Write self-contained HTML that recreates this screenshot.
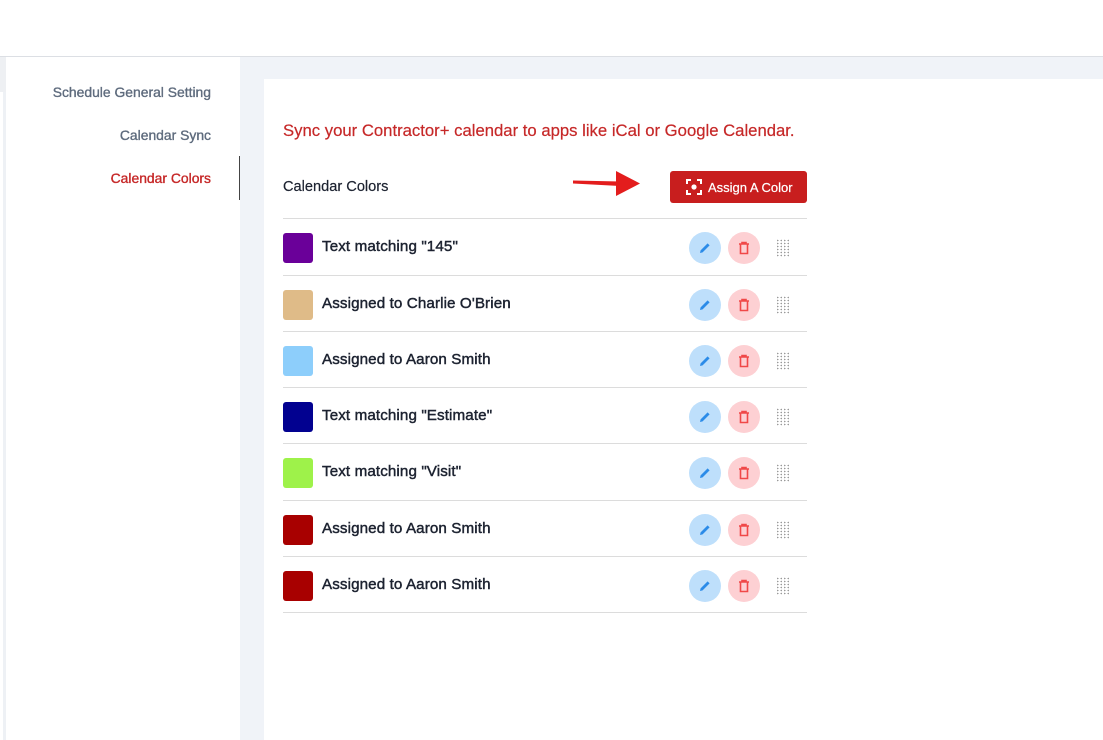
<!DOCTYPE html>
<html><head><style>
*{box-sizing:border-box;margin:0;padding:0}
body{width:1103px;height:740px;overflow:hidden;background:#fff;font-family:"Liberation Sans",Arial,sans-serif;position:relative}
.hdr{position:absolute;left:0;top:0;width:1103px;height:57px;background:#fff;border-bottom:1px solid #dcdfe4;box-shadow:0 1px 2px rgba(0,0,0,.06)}
.strip{position:absolute;left:3px;top:57px;width:3px;height:683px;background:#eef1f5}
.strip2{position:absolute;left:0;top:57px;width:6px;height:35px;background:#eef0f3}
.side{position:absolute;left:6px;top:57px;width:234px;height:683px;background:#fff}
.main{position:absolute;left:240px;top:57px;width:863px;height:683px;background:#f0f3f8}
.card{position:absolute;left:264px;top:79px;width:839px;height:661px;background:#fff}
.nav{position:absolute;right:892px;font-size:13.9px;color:#5e6b7d;-webkit-text-stroke:0.35px #5e6b7d;white-space:nowrap;text-align:right}
.nav.a{color:#c62828;-webkit-text-stroke:0.35px #c62828}
.ind{position:absolute;left:239px;top:156px;width:1px;height:44px;background:#444}
.sync{position:absolute;left:283px;top:121px;font-size:16.7px;color:#c62828;-webkit-text-stroke:0.2px #c62828}
.cc{position:absolute;left:283px;top:179px;font-size:14.6px;color:#1c2230;-webkit-text-stroke:0.2px #1c2230}
.btn{position:absolute;left:670px;top:171px;width:137px;height:32px;background:#c81e1e;border-radius:3px;color:#fff;font-size:13px;display:flex;align-items:center;padding-left:16px;-webkit-text-stroke:0.2px #fff}
.btn svg{margin-right:6px}
.row{position:absolute;left:283px;width:524px;height:56px;border-top:1px solid #dcdcdc}
.sw{position:absolute;left:0;top:14px;width:30px;height:30px;border-radius:3px}
.lbl{position:absolute;left:39px;top:19px;font-size:15.2px;color:#1c2230;-webkit-text-stroke:0.45px #1c2230;letter-spacing:0.1px}
.c{position:absolute;top:13px;width:32px;height:32px;border-radius:50%;display:flex;align-items:center;justify-content:center}
.e{left:406px;background:#bedffb}
.d{left:445px;background:#fdd0d3}
.dots{position:absolute;left:493px;top:20px;width:14px;height:18px;background-image:radial-gradient(circle,#9a9a9a 0.7px,transparent 0.9px);background-size:3.5px 3px}
</style></head><body>
<div class="hdr"></div>
<div class="side"></div>
<div class="strip"></div><div class="strip2"></div>
<div class="main"></div>
<div class="card"></div>
<div class="nav" style="top:84px">Schedule General Setting</div>
<div class="nav" style="top:127px">Calendar Sync</div>
<div class="nav a" style="top:170px">Calendar Colors</div>
<div class="ind"></div>
<div class="sync">Sync your Contractor+ calendar to apps like iCal or Google Calendar.</div>
<div class="cc">Calendar Colors</div>
<svg style="position:absolute;left:572px;top:170px" width="70" height="28"><path d="M1 10.5 L48 11.5 L48 16 L1 13.5Z" fill="#e31d1d"/><path d="M44 1 L68 13.5 L44 26Z" fill="#e31d1d"/></svg>
<div class="btn"><svg width="16" height="16" viewBox="0 0 16 16" fill="none" stroke="#fff" stroke-width="2"><path d="M1 5V1H5M11 1H15V5M15 11V15H11M5 15H1V11"/><circle cx="8" cy="8" r="2.6" fill="#fff" stroke="none"/></svg>Assign A Color</div>

<div class="row" style="top:218px"><div class="sw" style="background:#6a0099"></div><div class="lbl">Text matching "145"</div><div class="c e"><svg width="14" height="14" viewBox="0 0 14 14"><path d="M2 12L2.6 9.4 9.6 2.4 11.6 4.4 4.6 11.4Z" fill="#2b8be8"/></svg></div><div class="c d"><svg width="12" height="14" viewBox="0 0 12 14" fill="none" stroke="#f04848" stroke-width="1.6"><path d="M1 3H11M4 3V1.5H8V3M2.5 3.5V12.5H9.5V3.5"/></svg></div><div class="dots"></div></div>
<div class="row" style="top:275px"><div class="sw" style="background:#dfbb88"></div><div class="lbl">Assigned to Charlie O'Brien</div><div class="c e"><svg width="14" height="14" viewBox="0 0 14 14"><path d="M2 12L2.6 9.4 9.6 2.4 11.6 4.4 4.6 11.4Z" fill="#2b8be8"/></svg></div><div class="c d"><svg width="12" height="14" viewBox="0 0 12 14" fill="none" stroke="#f04848" stroke-width="1.6"><path d="M1 3H11M4 3V1.5H8V3M2.5 3.5V12.5H9.5V3.5"/></svg></div><div class="dots"></div></div>
<div class="row" style="top:331px"><div class="sw" style="background:#8dcefb"></div><div class="lbl">Assigned to Aaron Smith</div><div class="c e"><svg width="14" height="14" viewBox="0 0 14 14"><path d="M2 12L2.6 9.4 9.6 2.4 11.6 4.4 4.6 11.4Z" fill="#2b8be8"/></svg></div><div class="c d"><svg width="12" height="14" viewBox="0 0 12 14" fill="none" stroke="#f04848" stroke-width="1.6"><path d="M1 3H11M4 3V1.5H8V3M2.5 3.5V12.5H9.5V3.5"/></svg></div><div class="dots"></div></div>
<div class="row" style="top:387px"><div class="sw" style="background:#020190"></div><div class="lbl">Text matching "Estimate"</div><div class="c e"><svg width="14" height="14" viewBox="0 0 14 14"><path d="M2 12L2.6 9.4 9.6 2.4 11.6 4.4 4.6 11.4Z" fill="#2b8be8"/></svg></div><div class="c d"><svg width="12" height="14" viewBox="0 0 12 14" fill="none" stroke="#f04848" stroke-width="1.6"><path d="M1 3H11M4 3V1.5H8V3M2.5 3.5V12.5H9.5V3.5"/></svg></div><div class="dots"></div></div>
<div class="row" style="top:443px"><div class="sw" style="background:#9ef24a"></div><div class="lbl">Text matching "Visit"</div><div class="c e"><svg width="14" height="14" viewBox="0 0 14 14"><path d="M2 12L2.6 9.4 9.6 2.4 11.6 4.4 4.6 11.4Z" fill="#2b8be8"/></svg></div><div class="c d"><svg width="12" height="14" viewBox="0 0 12 14" fill="none" stroke="#f04848" stroke-width="1.6"><path d="M1 3H11M4 3V1.5H8V3M2.5 3.5V12.5H9.5V3.5"/></svg></div><div class="dots"></div></div>
<div class="row" style="top:500px"><div class="sw" style="background:#a80000"></div><div class="lbl">Assigned to Aaron Smith</div><div class="c e"><svg width="14" height="14" viewBox="0 0 14 14"><path d="M2 12L2.6 9.4 9.6 2.4 11.6 4.4 4.6 11.4Z" fill="#2b8be8"/></svg></div><div class="c d"><svg width="12" height="14" viewBox="0 0 12 14" fill="none" stroke="#f04848" stroke-width="1.6"><path d="M1 3H11M4 3V1.5H8V3M2.5 3.5V12.5H9.5V3.5"/></svg></div><div class="dots"></div></div>
<div class="row" style="top:556px;border-bottom:1px solid #dcdcdc;height:57px"><div class="sw" style="background:#a80000"></div><div class="lbl">Assigned to Aaron Smith</div><div class="c e"><svg width="14" height="14" viewBox="0 0 14 14"><path d="M2 12L2.6 9.4 9.6 2.4 11.6 4.4 4.6 11.4Z" fill="#2b8be8"/></svg></div><div class="c d"><svg width="12" height="14" viewBox="0 0 12 14" fill="none" stroke="#f04848" stroke-width="1.6"><path d="M1 3H11M4 3V1.5H8V3M2.5 3.5V12.5H9.5V3.5"/></svg></div><div class="dots"></div></div>
</body></html>
